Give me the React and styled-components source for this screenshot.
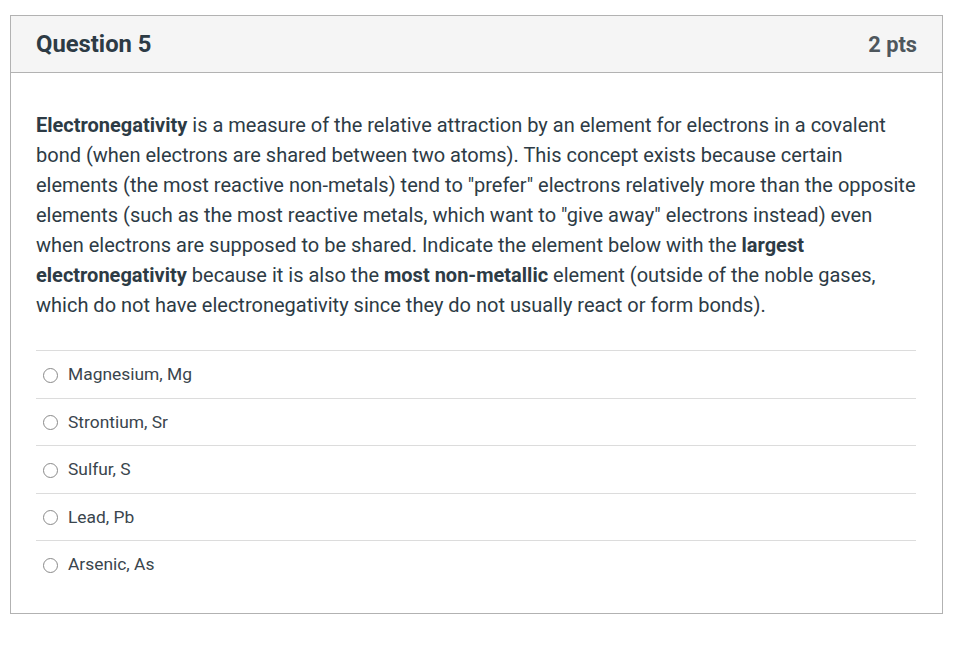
import React from "react";
import styled, { createGlobalStyle } from "styled-components";

const Global = createGlobalStyle`
  html, body { margin: 0; padding: 0; background: #fff; }
  body { font-family: Roboto, "Noto Sans", sans-serif; color: #2d3b45; }
`;

const Page = styled.div`
  padding: 15px 31px 0 10px;
`;

const Card = styled.div`
  width: 933px;
  box-sizing: border-box;
  border: 1px solid #b2b2b2;
  background: #fff;
`;

const Header = styled.div`
  display: flex;
  justify-content: space-between;
  align-items: center;
  height: 57px;
  box-sizing: border-box;
  padding: 0 25px 0 25px;
  background: #f5f5f5;
  border-bottom: 1px solid #b2b2b2;
`;

const Title = styled.h2`
  margin: 0;
  font-size: 23.8px;
  font-weight: 700;
  color: #2d3b45;
`;

const Points = styled.div`
  font-size: 21.8px;
  font-weight: 700;
  color: #4e575d;
`;

const Body = styled.div`
  padding: 37px 26px 25px 25px;
`;

const Text = styled.p`
  margin: 0 0 30px 0;
  font-size: 20px;
  line-height: 30px;
  color: #2d3b45;
  b { font-weight: 700; }
`;

const Answers = styled.div`
  display: flex;
  flex-direction: column;
`;

const Answer = styled.label`
  display: flex;
  align-items: center;
  height: 47.5px;
  box-sizing: border-box;
  border-top: 1px solid #dcdcdc;
  padding-left: 7px;
  font-size: 17.4px;
  color: #3a454d;
`;

const Radio = styled.span`
  width: 15px;
  height: 15px;
  border-radius: 50%;
  border: 1px solid #8a8a8a;
  box-sizing: border-box;
  margin-right: 10px;
  margin-top: 2px;
  flex: none;
`;

const answers = ["Magnesium, Mg", "Strontium, Sr", "Sulfur, S", "Lead, Pb", "Arsenic, As"];

export default function App() {
  return (
    <>
      <Global />
      <Page>
        <Card>
          <Header>
            <Title>Question 5</Title>
            <Points>2 pts</Points>
          </Header>
          <Body>
            <Text>
              <b>Electronegativity</b> is a measure of the relative attraction by an element for electrons in a covalent bond (when electrons are shared between two atoms). This concept exists because certain elements (the most reactive non-metals) tend to "prefer" electrons relatively more than the opposite elements (such as the most reactive metals, which want to "give away" electrons instead) even when electrons are supposed to be shared. Indicate the element below with the <b>largest electronegativity</b> because it is also the <b>most non-metallic</b> element (outside of the noble gases, which do not have electronegativity since they do not usually react or form bonds).
            </Text>
            <Answers>
              {answers.map((a) => (
                <Answer key={a}>
                  <Radio />
                  {a}
                </Answer>
              ))}
            </Answers>
          </Body>
        </Card>
      </Page>
    </>
  );
}
